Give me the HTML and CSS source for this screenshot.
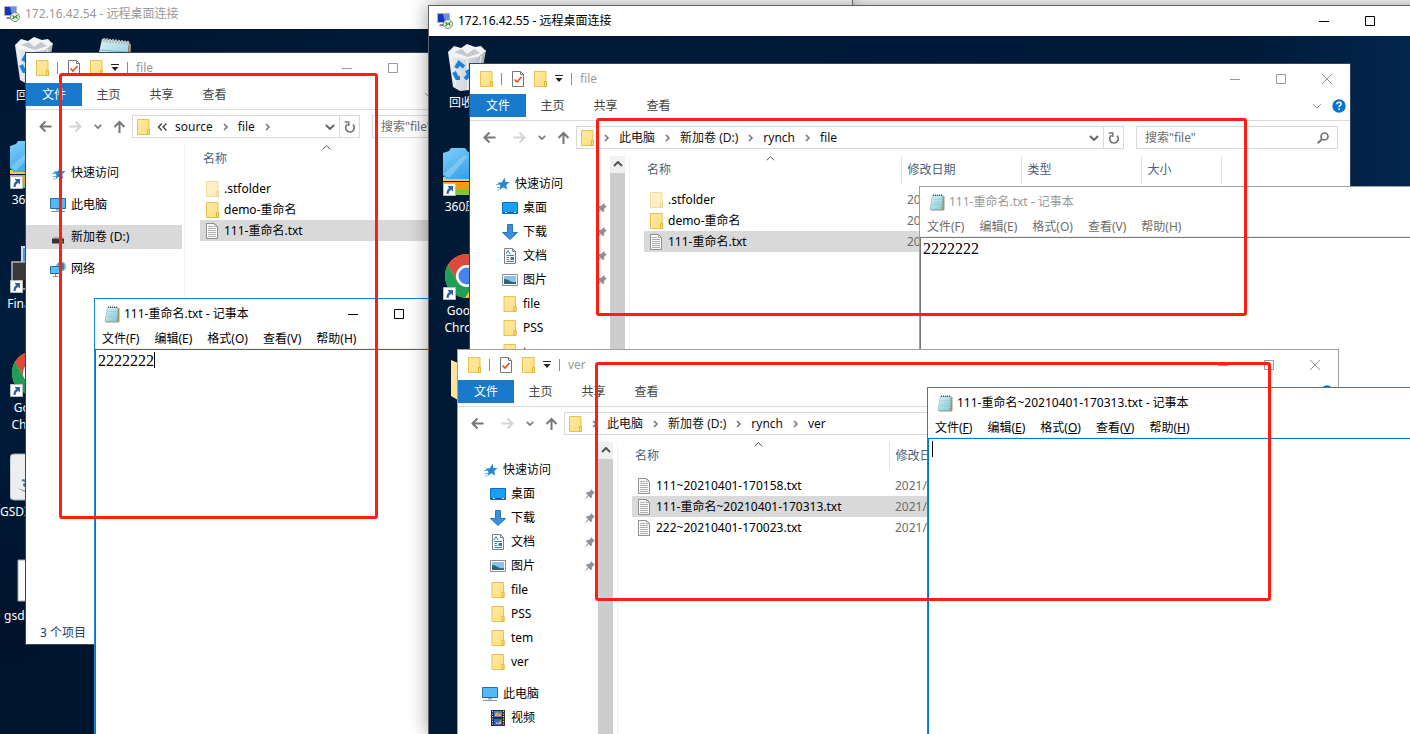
FILE: index.html
```html
<!DOCTYPE html>
<html lang="zh-CN">
<head>
<meta charset="utf-8">
<title>远程桌面连接</title>
<link rel="stylesheet" href="styles.css">
</head>
<body>
<svg class="sprite" aria-hidden="true">
  <defs>
    <linearGradient id="g-folder" x1="0" y1="0" x2="1" y2="1"><stop offset="0" stop-color="#ffe9a6"/><stop offset="1" stop-color="#fddf7c"/></linearGradient>
    <linearGradient id="g-note" x1="0" y1="0" x2="1" y2="1"><stop offset="0" stop-color="#e2f4f8"/><stop offset="1" stop-color="#7cc6d6"/></linearGradient>
    <linearGradient id="g-blue" x1="0" y1="0" x2="1" y2="1"><stop offset="0" stop-color="#7fd0f8"/><stop offset="1" stop-color="#1f8fe6"/></linearGradient>
    <linearGradient id="g-bin" x1="0" y1="0" x2="1" y2="0"><stop offset="0" stop-color="#e9ecee"/><stop offset=".6" stop-color="#cfd4d8"/><stop offset="1" stop-color="#a9b0b6"/></linearGradient>
  </defs>
  <symbol id="i-folder" viewBox="0 0 13 16"><path d="M.5.5h11.500v10h.5v5H.5z" fill="url(#g-folder)" stroke="#e8c14e"/><path d="M10.500 15.500v-5h2v5z" fill="#fbe08a" stroke="#e0b53c"/></symbol>
  <symbol id="i-check" viewBox="0 0 12 16"><path d="M.5.5h8l3 3v12H.5z" fill="#fdfdfd" stroke="#777"/><path d="M8.500.5v3h3" fill="none" stroke="#777"/><path d="M2.500 8.500l2.500 2.500 4.500-5" fill="none" stroke="#e0531f" stroke-width="1.700"/></symbol>
  <symbol id="i-more" viewBox="0 0 8 8"><path d="M0 .5h8" stroke="#222" stroke-width="1"/><path d="M.5 3h7L4 7z" fill="#222"/></symbol>
  <symbol id="i-min" viewBox="0 0 10 10"><path d="M0 5.500h10" stroke="currentColor"/></symbol>
  <symbol id="i-max" viewBox="0 0 10 10"><path d="M.5.5h9v9h-9z" fill="none" stroke="currentColor"/></symbol>
  <symbol id="i-close" viewBox="0 0 10 10"><path d="M0 0l10 10M10 0L0 10" stroke="currentColor"/></symbol>
  <symbol id="i-back" viewBox="0 0 13 12"><path d="M12.500 6H1.500M6.500 1L1.500 6l5 5" fill="none" stroke="currentColor" stroke-width="2"/></symbol>
  <symbol id="i-fwd" viewBox="0 0 13 12"><path d="M.5 6h11M6.500 1l5 5-5 5" fill="none" stroke="currentColor" stroke-width="2"/></symbol>
  <symbol id="i-up" viewBox="0 0 12 13"><path d="M6 13V2M1 7l5-5 5 5" fill="none" stroke="currentColor" stroke-width="2"/></symbol>
  <symbol id="i-down" viewBox="0 0 10 6"><path d="M1 1l4 4 4-4" fill="none" stroke="currentColor" stroke-width="2"/></symbol>
  <symbol id="i-thin" viewBox="0 0 10 6"><path d="M1 1l4 4 4-4" fill="none" stroke="currentColor"/></symbol>
  <symbol id="i-sep" viewBox="0 0 5 8"><path d="M1 1l3 3-3 3" fill="none" stroke="#777" stroke-width="1.600"/></symbol>
  <symbol id="i-sep2" viewBox="0 0 9 7"><path d="M4 .5l-3 3 3 3M8 .5l-3 3 3 3" fill="none" stroke="#444" stroke-width="1.200"/></symbol>
  <symbol id="i-refresh" viewBox="0 0 12 12"><path d="M3.500 3.200a4.300 4.300 0 1 0 5.500.4" fill="none" stroke="#777" stroke-width="1.700"/><path d="M4.800.2V5M.8 1h4.500" fill="none" stroke="#777" stroke-width="1.500"/></symbol>
  <symbol id="i-search" viewBox="0 0 12 12"><circle cx="7.500" cy="4.500" r="3.500" fill="none" stroke="#777" stroke-width="1.700"/><path d="M5 7L.8 11.200" stroke="#777" stroke-width="2"/></symbol>
  <symbol id="i-help" viewBox="0 0 14 14"><circle cx="7" cy="7" r="6.700" fill="#0a74d0"/><path d="M4.900 5.300q0-2 2.200-2 2 0 2 1.700 0 1-1.100 1.600-.9.500-.9 1.600" fill="none" stroke="#fff" stroke-width="1.500"/><path d="M6.300 9.500h1.600v1.600H6.300z" fill="#fff"/></symbol>
  <symbol id="i-sort" viewBox="0 0 9 5"><path d="M.7 4.300l3.800-3.600 3.800 3.600" fill="none" stroke="#555"/></symbol>
  <symbol id="i-txt" viewBox="0 0 13 16"><path d="M.5.5h8l3 3v12H.5z" fill="#fafafa" stroke="#8f8f8f"/><path d="M8.500.5v3h3M2 3.500h5M2 5.500h8M2 7.500h8M2 9.500h8M2 11.500h8M2 13.500h8" fill="none" stroke="#adadad"/></symbol>
  <symbol id="i-star" viewBox="0 0 16 16"><path d="M10.500 1.500l1 4.400 4.200.4-3.500 2.600 1 4.800-3.800-2.500L5.500 14l1-4.200-3.200-3 4.600-.6z" fill="#2389d4"/><path d="M2 8.500h4M3 11.500h3M3 14h2" stroke="#63b3ea"/></symbol>
  <symbol id="i-desk" viewBox="0 0 16 16"><path d="M.5 2.500h15v11H.5z" fill="#17a0f7" stroke="#0b6dbb"/><path d="M1 12.500h14" stroke="#0c5da3"/><path d="M3 12.500h2M12 12.500h2" stroke="#c5e7ff"/></symbol>
  <symbol id="i-dl" viewBox="0 0 16 16"><path d="M5.500.5h5v8h5L8 15.500.5 8.500h5z" fill="#3b8fdd" stroke="#2a76bd"/></symbol>
  <symbol id="i-doc" viewBox="0 0 16 16"><path d="M2.500.5h8l3 3v12h-11z" fill="#fbfbfb" stroke="#808080"/><path d="M10.500.5v3h3" fill="none" stroke="#808080"/><path d="M4 6l2-3.500L8 6M4.500 7.500H12M4.500 9.500H7M9 9.500h3M4.500 11.500H7M4.500 13.500H12" fill="none" stroke="#2c86c5"/><path d="M8.500 9h3.500v3H8.500z" fill="#3f7d96"/></symbol>
  <symbol id="i-pic" viewBox="0 0 16 16"><path d="M.5 2.500h15v11H.5z" fill="#fff" stroke="#8b8b8b"/><path d="M2 4h12v8H2z" fill="#8cc0ee"/><path d="M2 7q3 0 6 2t6 1v2H2z" fill="#2f6472"/></symbol>
  <symbol id="i-pc" viewBox="0 0 16 16"><path d="M.5 1.500h15v10H.5z" fill="#52b9f7" stroke="#2b6f9f"/><path d="M6 12h4v1.500H6z" fill="#8fa7b5"/><path d="M1 14.500h14" stroke="#8197a5"/></symbol>
  <symbol id="i-drive" viewBox="0 0 16 16"><path d="M2 9.500h12v5H2z" fill="#343434"/><path d="M3 8.500h10" stroke="#a9a9a9"/><path d="M11 12h2v1h-2z" fill="#4be04b"/></symbol>
  <symbol id="i-net" viewBox="0 0 16 16"><circle cx="11" cy="5.500" r="5" fill="#7fb4cf"/><path d="M8 3q3-3 6 0v6q-3 0-4-3z" fill="#3c84ac"/><path d="M.5 5.500h10v7H.5z" fill="#55bdf8" stroke="#24719f"/><path d="M3 15.500h5M5.500 13v2" stroke="#7493a4"/></symbol>
  <symbol id="i-video" viewBox="0 0 16 16"><path d="M1 0h14v16H1z" fill="#2d2d2d"/><path d="M4 1h8v6H4z" fill="#4c7ed8"/><path d="M4 9h8v6H4z" fill="#2f67cf"/><path d="M5 6V4l2-2 2 2 2-1v3zM6 14v-2l2 1 3-3v4z" fill="#d8ae3b"/><path d="M2.500 1v15M13.500 1v15" stroke="#e8e8e8" stroke-dasharray="1 1.500"/></symbol>
  <symbol id="i-pin" viewBox="0 0 10 10"><path d="M6 0l4 4-1.300.2-1.700 2 .2 2L6 9.200 3.700 7 .8 9.800.2 9.200 3 6.300.8 4 2 2.900l2 .1 1.800-1.700z" fill="#8a9299"/></symbol>
  <symbol id="i-note" viewBox="0 0 16 17"><path d="M4 2h11.500v13.500l-1 1H2z" fill="#a8926b"/><path d="M3.500 1.500H14L12.800 15.500H1z" fill="url(#g-note)" stroke="#7fb3bf" stroke-width=".6"/><path d="M4 5.500h9M4 8h8.500M3.500 10.500h9" stroke="#8cc9d5" stroke-width=".6"/><path d="M4 1.300h10" stroke="#555" stroke-width="1.600" stroke-dasharray="1 1"/></symbol>
  <symbol id="i-rdp" viewBox="0 0 16 16"><path d="M.5.5h12v9H.5z" fill="#1236c4" stroke="#b5b5ae"/><path d="M6 1h6v8H8z" fill="#6f8fe0"/><path d="M3 11h6l1 2H2z" fill="#8c8c86"/><circle cx="11" cy="11" r="4.500" fill="#eef0ea" stroke="#818a7c"/><path d="M8.500 9.500l2 1.700-2 1.800M13.500 9l-2 1.700 2 1.800" fill="none" stroke="#2c9a2b" stroke-width="1.300"/></symbol>
  <symbol id="d-bin" viewBox="0 0 48 48"><path d="M5 8l38-2-7 39-19 2-7-4z" fill="url(#g-bin)"/><path d="M5 8l6-6 7 2 6-4 8 3 6-1 5 5-8 6-13 2-12-2z" fill="#f2f3f4"/><path d="M11 8l8-3 5 5 7-5 6 4-12 4z" fill="#c3c8cc"/><path d="M8 12l5 30M24 15l1 31M38 12l-5 32" stroke="#fff" stroke-width="1.200" opacity=".7"/><g fill="none" stroke="#1b82dc" stroke-width="4"><path d="M13 24l3-5 5 4"/><path d="M11 28l3 6h3"/><path d="M24 26l2 5-4 4"/></g></symbol>
  <symbol id="d-note" viewBox="0 0 48 48"><path d="M13 2l27 3-3 42H3z" fill="url(#g-note)"/><path d="M40 5l2 3-2 39h-3z" fill="#b59a70"/><path d="M11 13l27 2M9 20l28 2" stroke="#74b6c5"/><path d="M14 3l26 3" stroke="#bcbcbc" stroke-width="4" stroke-dasharray="2 1"/></symbol>
  <symbol id="d-zip" viewBox="0 0 48 48"><path d="M0 34h48v7H0z" fill="#f59a16"/><path d="M0 29h48v4H0z" fill="#fbc83d"/><path d="M10 41h38v6H10z" fill="#84c632"/><path d="M0 5l6-2 2-3h14l3 4h20l3 3v20l-4 4H3l-3-4z" fill="url(#g-blue)"/><path d="M1 26L20 8h5L6 30z" fill="#b5e3fa" opacity=".4"/></symbol>
  <symbol id="d-term" viewBox="0 0 48 48"><path d="M12 2h36v26H12z" fill="#4b9be6" stroke="#c9d8e5" stroke-width="2"/><path d="M2 17h44v27H2z" fill="#1d1d1d" stroke="#b9bcbf" stroke-width="1.500"/><path d="M3 18h42v10L3 38z" fill="#383838"/></symbol>
  <symbol id="d-chrome" viewBox="0 0 48 48"><circle cx="24" cy="24" r="22" fill="#fbc938"/><path d="M5 13a22 22 0 0 1 38 0H24a11 11 0 0 0-9.500 16z" fill="#dc4a3d"/><path d="M5 13a22 22 0 0 0 17 33l9-14.500a11 11 0 0 1-16.500-2z" fill="#1f9e58"/><circle cx="24" cy="24" r="11" fill="#fff"/><circle cx="24" cy="24" r="8.500" fill="#4584ee"/></symbol>
  <symbol id="d-java" viewBox="0 0 48 48"><rect x="0" y="1" width="48" height="46" rx="4" fill="#eceef0" stroke="#9daab8"/><path d="M22 7q-5 7 0 11t-2 9M17 30q-6 2 0 4h15" fill="none" stroke="#4f7396" stroke-width="2"/><path d="M8 35q10 6 28 0-2 5-12 5T8 35z" fill="#54789a"/><path d="M12 27q8 3 18 0" fill="none" stroke="#54789a" stroke-width="2"/></symbol>
  <symbol id="d-file" viewBox="0 0 48 48"><path d="M8 3h32v41H8z" fill="#fafafa" stroke="#aaa"/></symbol>
  <symbol id="d-folder" viewBox="0 0 48 48"><path d="M8 4l12 5v38L8 40z" fill="#ffe49a"/><path d="M20 9h22v38H20z" fill="#efc95e"/></symbol>
  <symbol id="d-link" viewBox="0 0 13 13"><path d="M.5.5h12v12H.5z" fill="#fff" stroke="#b8bcc0"/><path d="M4.500 3H10v5.500L8.200 6.700Q5.500 8 5.500 11H3.700q-.7-3.500 2.400-6z" fill="#2d62a8"/></symbol>
</svg>

<main class="screen">
  <section class="remote remote-back" aria-label="172.16.42.54">
    <header class="remote-bar">
      <svg class="s16"><use href="#i-rdp"/></svg><span>172.16.42.54 - 远程桌面连接</span>
    </header>
    <div class="desktop">
      <div class="shortcuts shortcuts-narrow">
        <div class="shortcut"><svg class="s48"><use href="#d-bin"/></svg><span>回收站</span></div>
        <div class="shortcut"><svg class="s48"><use href="#d-zip"/></svg><svg class="link"><use href="#d-link"/></svg><span>360压缩</span></div>
        <div class="shortcut"><svg class="s48"><use href="#d-term"/></svg><svg class="link"><use href="#d-link"/></svg><span>FinalShell</span></div>
        <div class="shortcut"><svg class="s48"><use href="#d-chrome"/></svg><svg class="link"><use href="#d-link"/></svg><span>Google Chrome</span></div>
        <div class="shortcut"><svg class="s48"><use href="#d-java"/></svg><span class="start">GSDI</span></div>
        <div class="shortcut"><svg class="s48"><use href="#d-file"/></svg><span class="start indent">gsdi</span></div>
      </div>
      <div class="shortcuts shortcuts-second">
        <div class="shortcut"><svg class="s48"><use href="#d-note"/></svg></div>
      </div>

      <article class="win explorer at-source">
        <header class="ex-title">
          <svg class="fold"><use href="#i-folder"/></svg><i class="bar"></i>
          <svg class="check"><use href="#i-check"/></svg><svg class="fold"><use href="#i-folder"/></svg>
          <svg class="s8"><use href="#i-more"/></svg><i class="bar"></i><span>file</span>
          <div class="controls">
            <button aria-label="最小化"><svg class="s10"><use href="#i-min"/></svg></button><button aria-label="最大化"><svg class="s10"><use href="#i-max"/></svg></button><button aria-label="关闭"><svg class="s10"><use href="#i-close"/></svg></button>
          </div>
        </header>
        <div class="tabs">
          <button class="tab tab-file">文件</button><button class="tab">主页</button><button class="tab">共享</button><button class="tab">查看</button>
          <div class="tab-tools"><svg class="chev"><use href="#i-thin"/></svg><svg class="s14"><use href="#i-help"/></svg></div>
        </div>
        <div class="path-row">
          <button class="go" aria-label="后退"><svg class="arrow"><use href="#i-back"/></svg></button><button class="go off" aria-label="前进"><svg class="arrow"><use href="#i-fwd"/></svg></button><button class="recent" aria-label="最近"><svg class="tiny"><use href="#i-down"/></svg></button><button class="up" aria-label="向上"><svg class="arrow"><use href="#i-up"/></svg></button>
          <div class="address">
            <svg class="fold"><use href="#i-folder"/></svg><svg class="sep"><use href="#i-sep2"/></svg><a href="#">source</a><svg class="sep"><use href="#i-sep"/></svg><a href="#">file</a><svg class="sep"><use href="#i-sep"/></svg>
            <button class="drop" aria-label="展开"><svg class="chev"><use href="#i-down"/></svg></button><button class="reload" aria-label="刷新"><svg class="s12"><use href="#i-refresh"/></svg></button>
          </div>
          <div class="search search-short"><input type="text" aria-label="搜索" placeholder='搜索"file"'></div>
        </div>
        <div class="panes">
          <nav class="tree tree-wide">
            <a class="node" href="#"><svg class="s16"><use href="#i-star"/></svg>快速访问</a>
            <a class="node group" href="#"><svg class="s16"><use href="#i-pc"/></svg>此电脑</a>
            <a class="node group current" href="#"><svg class="s16"><use href="#i-drive"/></svg>新加卷 (D:)</a>
            <a class="node group" href="#"><svg class="s16"><use href="#i-net"/></svg>网络</a>
          </nav>
          <div class="files">
            <table>
              <thead><tr><th class="c-name">名称<svg class="sort"><use href="#i-sort"/></svg></th><th class="c-date"></th><th class="c-type"></th><th class="c-size"></th></tr></thead>
              <tbody>
                <tr><td><a href="#"><svg class="fold pale"><use href="#i-folder"/></svg>.stfolder</a></td><td></td><td></td><td></td></tr>
                <tr><td><a href="#"><svg class="fold"><use href="#i-folder"/></svg>demo-重命名</a></td><td></td><td></td><td></td></tr>
                <tr class="selected"><td><a href="#"><svg class="fold"><use href="#i-txt"/></svg>111-重命名.txt</a></td><td></td><td></td><td></td></tr>
              </tbody>
            </table>
          </div>
        </div>
        <footer class="status">3 个项目</footer>
      </article>

      <article class="win notepad at-note-source">
        <header class="np-title"><svg class="s17"><use href="#i-note"/></svg><span>111-重命名.txt - 记事本</span>
          <div class="controls"><button aria-label="最小化"><svg class="s10"><use href="#i-min"/></svg></button><button aria-label="最大化"><svg class="s10"><use href="#i-max"/></svg></button><button aria-label="关闭"><svg class="s10"><use href="#i-close"/></svg></button></div>
        </header>
        <div class="menu"><button>文件(F)</button><button>编辑(E)</button><button>格式(O)</button><button>查看(V)</button><button>帮助(H)</button></div>
        <div class="page"><textarea aria-label="文本" spellcheck="false">2222222</textarea><i class="caret caret-end"></i></div>
      </article>
    </div>
  </section>

  <section class="remote remote-front" aria-label="172.16.42.55">
    <header class="remote-bar">
      <svg class="s16"><use href="#i-rdp"/></svg><span>172.16.42.55 - 远程桌面连接</span>
      <div class="controls"><button aria-label="最小化"><svg class="s10"><use href="#i-min"/></svg></button><button aria-label="最大化"><svg class="s10"><use href="#i-max"/></svg></button><button aria-label="关闭"><svg class="s10"><use href="#i-close"/></svg></button></div>
    </header>
    <div class="desktop">
      <div class="shortcuts">
        <div class="shortcut"><svg class="s48"><use href="#d-bin"/></svg><span>回收站</span></div>
        <div class="shortcut"><svg class="s48"><use href="#d-zip"/></svg><svg class="link"><use href="#d-link"/></svg><span>360压缩</span></div>
        <div class="shortcut"><svg class="s48"><use href="#d-chrome"/></svg><svg class="link"><use href="#d-link"/></svg><span>Google Chrome</span></div>
        <div class="shortcut"><svg class="s48"><use href="#d-folder"/></svg></div>
      </div>

      <article class="win explorer at-file">
        <header class="ex-title">
          <svg class="fold"><use href="#i-folder"/></svg><i class="bar"></i>
          <svg class="check"><use href="#i-check"/></svg><svg class="fold"><use href="#i-folder"/></svg>
          <svg class="s8"><use href="#i-more"/></svg><i class="bar"></i><span>file</span>
          <div class="controls">
            <button aria-label="最小化"><svg class="s10"><use href="#i-min"/></svg></button><button aria-label="最大化"><svg class="s10"><use href="#i-max"/></svg></button><button aria-label="关闭"><svg class="s10"><use href="#i-close"/></svg></button>
          </div>
        </header>
        <div class="tabs">
          <button class="tab tab-file">文件</button><button class="tab">主页</button><button class="tab">共享</button><button class="tab">查看</button>
          <div class="tab-tools"><svg class="chev"><use href="#i-thin"/></svg><svg class="s14"><use href="#i-help"/></svg></div>
        </div>
        <div class="path-row">
          <button class="go" aria-label="后退"><svg class="arrow"><use href="#i-back"/></svg></button><button class="go off" aria-label="前进"><svg class="arrow"><use href="#i-fwd"/></svg></button><button class="recent" aria-label="最近"><svg class="tiny"><use href="#i-down"/></svg></button><button class="up" aria-label="向上"><svg class="arrow"><use href="#i-up"/></svg></button>
          <div class="address">
            <svg class="fold"><use href="#i-folder"/></svg><svg class="sep"><use href="#i-sep"/></svg><a href="#">此电脑</a><svg class="sep"><use href="#i-sep"/></svg><a href="#">新加卷 (D:)</a><svg class="sep"><use href="#i-sep"/></svg><a href="#">rynch</a><svg class="sep"><use href="#i-sep"/></svg><a href="#">file</a>
            <button class="drop" aria-label="展开"><svg class="chev"><use href="#i-down"/></svg></button><button class="reload" aria-label="刷新"><svg class="s12"><use href="#i-refresh"/></svg></button>
          </div>
          <div class="search"><input type="text" aria-label="搜索" placeholder='搜索"file"'><svg class="s12"><use href="#i-search"/></svg></div>
        </div>
        <div class="panes">
          <nav class="tree">
            <a class="node" href="#"><svg class="s16"><use href="#i-star"/></svg>快速访问</a>
            <a class="node child" href="#"><svg class="s16"><use href="#i-desk"/></svg>桌面<svg class="pin"><use href="#i-pin"/></svg></a>
            <a class="node child" href="#"><svg class="s16"><use href="#i-dl"/></svg>下载<svg class="pin"><use href="#i-pin"/></svg></a>
            <a class="node child" href="#"><svg class="s16"><use href="#i-doc"/></svg>文档<svg class="pin"><use href="#i-pin"/></svg></a>
            <a class="node child" href="#"><svg class="s16"><use href="#i-pic"/></svg>图片<svg class="pin"><use href="#i-pin"/></svg></a>
            <a class="node child" href="#"><svg class="s16"><use href="#i-folder"/></svg>file</a>
            <a class="node child" href="#"><svg class="s16"><use href="#i-folder"/></svg>PSS</a>
            <a class="node child" href="#"><svg class="s16"><use href="#i-folder"/></svg>tem</a>
          </nav>
          <div class="scroll"><svg class="chev flip"><use href="#i-down"/></svg></div>
          <div class="files">
            <table>
              <thead><tr><th class="c-name">名称<svg class="sort"><use href="#i-sort"/></svg></th><th class="c-date">修改日期</th><th class="c-type">类型</th><th class="c-size">大小</th></tr></thead>
              <tbody>
                <tr><td><a href="#"><svg class="fold pale"><use href="#i-folder"/></svg>.stfolder</a></td><td>20</td><td></td><td></td></tr>
                <tr><td><a href="#"><svg class="fold"><use href="#i-folder"/></svg>demo-重命名</a></td><td>20</td><td></td><td></td></tr>
                <tr class="selected"><td><a href="#"><svg class="fold"><use href="#i-txt"/></svg>111-重命名.txt</a></td><td>20</td><td></td><td></td></tr>
              </tbody>
            </table>
          </div>
        </div>
      </article>

      <article class="win notepad inactive at-note-file">
        <header class="np-title"><svg class="s17"><use href="#i-note"/></svg><span>111-重命名.txt - 记事本</span></header>
        <div class="menu"><button>文件(F)</button><button>编辑(E)</button><button>格式(O)</button><button>查看(V)</button><button>帮助(H)</button></div>
        <div class="page"><textarea aria-label="文本" spellcheck="false">2222222</textarea></div>
      </article>

      <article class="win explorer framed at-ver">
        <header class="ex-title">
          <svg class="fold"><use href="#i-folder"/></svg><i class="bar"></i>
          <svg class="check"><use href="#i-check"/></svg><svg class="fold"><use href="#i-folder"/></svg>
          <svg class="s8"><use href="#i-more"/></svg><i class="bar"></i><span>ver</span>
          <div class="controls">
            <button aria-label="最小化"><svg class="s10"><use href="#i-min"/></svg></button><button aria-label="最大化"><svg class="s10"><use href="#i-max"/></svg></button><button aria-label="关闭"><svg class="s10"><use href="#i-close"/></svg></button>
          </div>
        </header>
        <div class="tabs">
          <button class="tab tab-file">文件</button><button class="tab">主页</button><button class="tab">共享</button><button class="tab">查看</button>
          <div class="tab-tools"><svg class="chev"><use href="#i-thin"/></svg><svg class="s14"><use href="#i-help"/></svg></div>
        </div>
        <div class="path-row">
          <button class="go" aria-label="后退"><svg class="arrow"><use href="#i-back"/></svg></button><button class="go off" aria-label="前进"><svg class="arrow"><use href="#i-fwd"/></svg></button><button class="recent" aria-label="最近"><svg class="tiny"><use href="#i-down"/></svg></button><button class="up" aria-label="向上"><svg class="arrow"><use href="#i-up"/></svg></button>
          <div class="address">
            <svg class="fold"><use href="#i-folder"/></svg><svg class="sep"><use href="#i-sep"/></svg><a href="#">此电脑</a><svg class="sep"><use href="#i-sep"/></svg><a href="#">新加卷 (D:)</a><svg class="sep"><use href="#i-sep"/></svg><a href="#">rynch</a><svg class="sep"><use href="#i-sep"/></svg><a href="#">ver</a>
          </div>
        </div>
        <div class="panes">
          <nav class="tree">
            <a class="node" href="#"><svg class="s16"><use href="#i-star"/></svg>快速访问</a>
            <a class="node child" href="#"><svg class="s16"><use href="#i-desk"/></svg>桌面<svg class="pin"><use href="#i-pin"/></svg></a>
            <a class="node child" href="#"><svg class="s16"><use href="#i-dl"/></svg>下载<svg class="pin"><use href="#i-pin"/></svg></a>
            <a class="node child" href="#"><svg class="s16"><use href="#i-doc"/></svg>文档<svg class="pin"><use href="#i-pin"/></svg></a>
            <a class="node child" href="#"><svg class="s16"><use href="#i-pic"/></svg>图片<svg class="pin"><use href="#i-pin"/></svg></a>
            <a class="node child" href="#"><svg class="s16"><use href="#i-folder"/></svg>file</a>
            <a class="node child" href="#"><svg class="s16"><use href="#i-folder"/></svg>PSS</a>
            <a class="node child" href="#"><svg class="s16"><use href="#i-folder"/></svg>tem</a>
            <a class="node child" href="#"><svg class="s16"><use href="#i-folder"/></svg>ver</a>
            <a class="node group" href="#"><svg class="s16"><use href="#i-pc"/></svg>此电脑</a>
            <a class="node child" href="#"><svg class="s16"><use href="#i-video"/></svg>视频</a>
          </nav>
          <div class="scroll"><svg class="chev flip"><use href="#i-down"/></svg></div>
          <div class="files">
            <table>
              <thead><tr><th class="c-name">名称<svg class="sort"><use href="#i-sort"/></svg></th><th class="c-date">修改日</th><th class="c-type"></th><th class="c-size"></th></tr></thead>
              <tbody>
                <tr><td><a href="#"><svg class="fold"><use href="#i-txt"/></svg>111~20210401-170158.txt</a></td><td>2021/</td><td></td><td></td></tr>
                <tr class="selected"><td><a href="#"><svg class="fold"><use href="#i-txt"/></svg>111-重命名~20210401-170313.txt</a></td><td>2021/</td><td></td><td></td></tr>
                <tr><td><a href="#"><svg class="fold"><use href="#i-txt"/></svg>222~20210401-170023.txt</a></td><td>2021/</td><td></td><td></td></tr>
              </tbody>
            </table>
          </div>
        </div>
      </article>

      <article class="win notepad at-note-ver">
        <header class="np-title"><svg class="s17"><use href="#i-note"/></svg><span>111-重命名~20210401-170313.txt - 记事本</span></header>
        <div class="menu"><button>文件(<u>F</u>)</button><button>编辑(<u>E</u>)</button><button>格式(<u>O</u>)</button><button>查看(<u>V</u>)</button><button>帮助(<u>H</u>)</button></div>
        <div class="page"><textarea aria-label="文本" spellcheck="false"></textarea><i class="caret"></i></div>
      </article>
    </div>
  </section>

  <div class="mark mark-source"></div>
  <div class="mark mark-file"></div>
  <div class="mark mark-ver"></div>
</main>
</body>
</html>
```
FILE: styles.css
```css
* { box-sizing: border-box; }
body {
  margin: 0;
  font: 12px/16px "Noto Sans", "Noto Sans CJK SC", sans-serif;
  color: #000;
}
button, input, textarea { font: inherit; color: inherit; border: 0; padding: 0; margin: 0; background: none; }
a { color: inherit; text-decoration: none; }
svg { flex: none; display: block; }
.sprite { position: absolute; width: 0; height: 0; }

.s8 { width: 8px; height: 8px; }
.s10 { width: 10px; height: 10px; }
.s12 { width: 12px; height: 12px; }
.s14 { width: 14px; height: 14px; }
.s16 { width: 16px; height: 16px; }
.s17 { width: 16px; height: 17px; }
.s48 { width: 48px; height: 48px; }
.fold { width: 13px; height: 16px; }
.check { width: 16px; height: 16px; }
.pale { opacity: .55; }
.arrow { width: 13px; height: 13px; }
.tiny { width: 8px; height: 5px; }
.chev { width: 10px; height: 6px; }
.flip { transform: rotate(180deg); }

/* Screen and remote sessions */
.screen { position: relative; height: 100vh; overflow: hidden; background: #fff; }
.remote { position: absolute; display: flex; flex-direction: column; background: #fff; }
.remote-back { left: 0; top: 0; bottom: 0; width: 853px; border-right: 1px solid #777; box-shadow: 0 0 16px rgba(0, 0, 0, .3); color: #999; }
.remote-front { left: 428px; top: 5px; right: -30px; bottom: 0; border: 1px solid #606060; border-bottom: 0; box-shadow: 0 0 18px rgba(0, 0, 0, .4); }
.remote-bar { display: flex; align-items: center; gap: 5px; height: 29px; padding: 0 0 2px 4px; }
.remote-front .remote-bar { height: 30px; padding: 0 0 0 8px; }
.desktop {
  position: relative;
  flex: 1;
  display: flex;
  overflow: hidden;
  color: #fff;
  background: linear-gradient(160deg, #001630 0%, #001d3d 30%, #00132b 60%, #001c3a 100%);
}
.remote-front .desktop { background: linear-gradient(90deg, #001a36 0%, #00193a 50%, #001a38 80%, #03284f 100%); }

.shortcuts { width: 76px; padding-top: 8px; }
.shortcuts-narrow { width: 68px; }
.shortcuts-second { width: 90px; }
.shortcut { position: relative; display: flex; flex-direction: column; align-items: center; height: 104px; text-align: center; line-height: 17px; }
.shortcut span { margin-top: 2px; }
.shortcut .start { align-self: flex-start; }
.shortcut .indent { padding-left: 4px; }
.shortcut .link { position: absolute; left: calc(50% - 24px); top: 35px; width: 13px; height: 13px; }

/* Windows */
.win { position: absolute; display: flex; flex-direction: column; overflow: hidden; background: #fff; color: #000; border: 1px solid #33475c; }
.framed { border-color: #a0a0a0; }
.controls { display: flex; align-self: stretch; margin-left: auto; }
.controls button { width: 46px; display: grid; place-items: center; }

.at-source { left: 25px; top: 23px; bottom: 89px; width: 438px; }
.at-file { left: 40px; top: 27px; bottom: 0; width: 882px; }
.at-ver { left: 28px; top: 313px; bottom: -1px; width: 882px; }
.at-note-source { left: 94px; top: 269px; bottom: -1px; width: 375px; }
.at-note-file { left: 490px; top: 150px; bottom: 0; right: -120px; }
.at-note-ver { left: 498px; top: 351px; bottom: -1px; right: -120px; }

/* Explorer */
.ex-title { display: flex; align-items: center; gap: 8px; height: 30px; padding-left: 10px; color: #999; }
.bar { width: 1px; height: 12px; background: #8c8c8c; }
.tabs { display: flex; height: 27px; padding-bottom: 3px; border-bottom: 1px solid #dadbdc; color: #444; }
.tab { width: 53px; padding-top: 1px; text-align: center; }
.tab-file { width: 56px; background: #1979ca; color: #fff; }
.tab-tools { display: flex; align-items: center; gap: 10px; margin-left: auto; padding-right: 4px; color: #999; }

.path-row { display: flex; align-items: center; height: 35px; padding: 0 12px 2px 4px; color: #777; }
.path-row > button { display: grid; place-items: center; height: 23px; }
.go { width: 30px; }
.path-row > .off { color: #d4d4d4; }
.recent { width: 16px; }
.up { width: 26px; }
.address { flex: 1; display: flex; align-items: center; height: 23px; padding-left: 4px; border: 1px solid #d9d9d9; color: #111; }
.address .sep { width: 25px; height: 8px; }
.drop { width: 19px; height: 21px; margin-left: auto; display: grid; place-items: center; color: #666; }
.reload { width: 20px; height: 21px; display: grid; place-items: center; border-left: 1px solid #d9d9d9; }
.search { display: flex; align-items: center; width: 202px; height: 23px; margin-left: 12px; padding: 0 8px; border: 1px solid #d9d9d9; }
.search-short { width: 78px; }
.search input { flex: 1; min-width: 0; outline: 0; }
.search input::placeholder { color: #6d6d6d; opacity: 1; }

.panes { flex: 1; display: flex; min-height: 0; }
.tree { width: 140px; padding-top: 16px; overflow: hidden; }
.tree-wide { width: 156px; }
.node { display: flex; align-items: center; gap: 5px; height: 24px; padding: 0 3px 0 24px; }
.child { padding-left: 32px; }
.group { margin-top: 8px; }
.current { background: #d9d9d9; }
.pin { width: 10px; height: 10px; margin-left: auto; }
.scroll { width: 15px; padding-top: 5px; display: flex; justify-content: center; background: linear-gradient(#f0f0f0 17px, #cdcdcd 17px); color: #555; }
.files { flex: 1; min-width: 0; margin-left: 4px; padding-left: 14px; border-left: 1px solid #f2f2f2; overflow: hidden; }
.tree-wide + .files { margin-left: 2px; padding-left: 15px; }

table { table-layout: fixed; border-collapse: collapse; width: 577px; }
th { position: relative; height: 27px; padding: 0 0 0 3px; border-right: 1px solid #e2e2e2; text-align: left; font-weight: 400; color: #4c607a; }
th + th { padding-left: 6px; }
.c-name { width: 257px; }
.c-date, .c-type { width: 120px; }
.c-size { width: 80px; }
.sort { position: absolute; top: 0; left: calc(50% - 6px); width: 9px; height: 5px; }
tbody::before { content: ""; display: block; height: 6px; }
td { height: 21px; padding: 0 0 0 6px; color: #6d6d6d; }
td a { display: flex; align-items: center; gap: 5px; color: #000; white-space: nowrap; }
.selected { background: #d9d9d9; }
.status { height: 23px; padding-left: 14px; line-height: 24px; color: #26406b; }

/* Notepad */
.notepad { border-color: #1883d7; }
.np-title { display: flex; align-items: center; gap: 4px; height: 30px; padding-left: 9px; }
.menu { display: flex; gap: 1px; height: 20px; border-bottom: 1px solid #f0f0f0; }
.menu button { padding: 0 7px; white-space: nowrap; }
.page { position: relative; flex: 1; display: flex; border-top: 1px solid #0078d7; border-left: 1px solid #0078d7; }
.page textarea { flex: 1; padding: 3px 2px; resize: none; outline: 0; font: 16px/16px "Liberation Serif", serif; color: #000; }
.caret { position: absolute; left: 3px; top: 2px; width: 1px; height: 16px; background: #000; }
.caret-end { left: 58px; }
.inactive { border-color: #a0a0a0; color: #6d6d6d; }
.inactive .np-title { color: #999; }
.inactive .page { border-color: #777; }

/* Highlight frames */
.mark { position: absolute; border: 3px solid #ff1e10; border-radius: 3px; pointer-events: none; }
.mark-source { left: 59px; top: 73px; width: 319px; height: 446px; }
.mark-file { left: 596px; top: 118px; width: 651px; height: 198px; }
.mark-ver { left: 595px; top: 362px; width: 676px; height: 239px; }
```
